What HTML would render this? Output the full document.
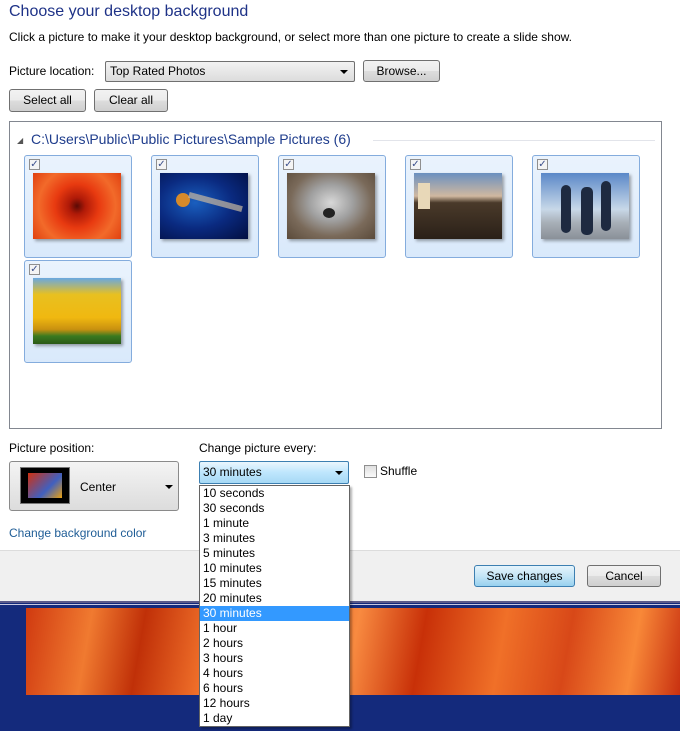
<!DOCTYPE html>
<html><head><style>
*{margin:0;padding:0;box-sizing:border-box}
body{width:680px;height:731px;overflow:hidden;background:#fff;font-family:"Liberation Sans","DejaVu Sans",sans-serif;font-size:12px;color:#000;position:relative}
.a{position:absolute;white-space:nowrap}
.btn{position:absolute;border:1px solid #707070;border-radius:3px;background:linear-gradient(#f2f2f2 0%,#ebebeb 50%,#dddddd 51%,#cfcfcf 100%);text-align:center;font-size:12px}
.tile{position:absolute;width:108px;height:103px;border:1px solid #84acdd;border-radius:3px;background:linear-gradient(#eaf3fd,#d9e9fb)}
.tile .cb{position:absolute;left:4px;top:3px;width:11px;height:11px;border:1px solid #8f8f8f;background:#f4f4f4;font-size:10px;line-height:9px;color:#3b4f8c;text-align:center}
.tile .im{position:absolute;left:8px;top:17px;width:88px;height:66px;box-shadow:2px 2px 3px rgba(0,0,0,.35)}
.dd div{height:15px;line-height:15px;padding-left:3px;font-size:12px}
</style></head><body>
<div class="a" style="left:9px;top:3px;font-size:16px;color:#1e3287">Choose your desktop background</div>
<div class="a" style="left:9px;top:30px">Click a picture to make it your desktop background, or select more than one picture to create a slide show.</div>
<div class="a" style="left:9px;top:64px">Picture location:</div>
<div class="a" style="left:105px;top:61px;width:250px;height:21px;border:1px solid #707070;border-radius:2px;background:linear-gradient(#f3f3f3,#dcdcdc);padding:2px 4px">Top Rated Photos<span style="position:absolute;right:6px;top:8px;border:4px solid transparent;border-top:4px solid #000;border-bottom:0"></span></div>
<div class="btn" style="left:363px;top:60px;width:77px;height:22px;line-height:20px">Browse...</div>
<div class="btn" style="left:9px;top:89px;width:77px;height:23px;line-height:21px">Select all</div>
<div class="btn" style="left:94px;top:89px;width:74px;height:23px;line-height:21px">Clear all</div>
<div class="a" style="left:9px;top:121px;width:653px;height:308px;border:1px solid #828790"></div>
<div class="a" style="left:17px;top:136px;font-size:8px;color:#555">&#9698;</div>
<div class="a" style="left:31px;top:131px;font-size:14px;color:#1e3c8c">C:\Users\Public\Public Pictures\Sample Pictures (6)</div>
<div class="a" style="left:373px;top:140px;width:282px;height:1px;background:#e2e4ea"></div>

<div class="tile" style="left:24px;top:155px"><div class="cb">&#10003;</div><div class="im" style="background:radial-gradient(circle at 50% 50%,#5a0a05 0,#b01a08 15%,#e83a10 40%,#f26a2a 70%,#e04010 100%)"></div></div>
<div class="tile" style="left:151px;top:155px"><div class="cb">&#10003;</div><div class="im" style="background:radial-gradient(ellipse at 40% 45%,#1a5fbf,#0a2a80 50%,#020e40)"><div style="position:absolute;left:16px;top:20px;width:14px;height:14px;border-radius:50%;background:#d68a2a"></div><div style="position:absolute;left:28px;top:26px;width:55px;height:6px;background:#c8b8a0;transform:rotate(15deg);opacity:.7"></div></div></div>
<div class="tile" style="left:278px;top:155px"><div class="cb">&#10003;</div><div class="im" style="background:radial-gradient(ellipse at 50% 45%,#d8d8d8,#a0a0a0 35%,#7a6a5a 65%,#5a4a3a)"><div style="position:absolute;left:36px;top:35px;width:12px;height:10px;border-radius:50%;background:#222"></div></div></div>
<div class="tile" style="left:405px;top:155px"><div class="cb">&#10003;</div><div class="im" style="background:linear-gradient(#6a90c0 0%,#d0b8a0 35%,#4a3a2a 45%,#2a2018 100%)"><div style="position:absolute;left:4px;top:10px;width:12px;height:26px;background:#e8d8b8"></div></div></div>
<div class="tile" style="left:532px;top:155px"><div class="cb">&#10003;</div><div class="im" style="background:linear-gradient(#5a88c8,#c8d8e8 55%,#a8b0b8 75%,#8a9098)"><div style="position:absolute;left:20px;top:12px;width:10px;height:48px;background:#1e2a40;border-radius:5px"></div><div style="position:absolute;left:40px;top:14px;width:12px;height:48px;background:#1e2a40;border-radius:5px"></div><div style="position:absolute;left:60px;top:8px;width:10px;height:50px;background:#1e2a40;border-radius:5px"></div></div></div>
<div class="tile" style="left:24px;top:260px"><div class="cb">&#10003;</div><div class="im" style="background:linear-gradient(#6aa8e0 0%,#e8c020 25%,#f0b810 60%,#c89010 78%,#3a7a20 88%,#2a5a18 100%)"></div></div>

<div class="a" style="left:9px;top:441px">Picture position:</div>
<div class="a" style="left:199px;top:441px">Change picture every:</div>
<div class="a" style="left:9px;top:461px;width:170px;height:50px;border:1px solid #8a8a8a;border-radius:3px;background:linear-gradient(#f4f4f4,#dcdcdc)">
<div style="position:absolute;left:10px;top:5px;width:50px;height:37px;background:#000;border:1px solid #777"><div style="position:absolute;left:7px;top:5px;width:34px;height:25px;background:linear-gradient(135deg,#d03010,#4060c0 60%,#e8a010)"></div></div>
<div style="position:absolute;left:70px;top:18px">Center</div>
<span style="position:absolute;right:5px;top:23px;border:4px solid transparent;border-top:4px solid #000;border-bottom:0"></span></div>
<div class="a" style="left:199px;top:461px;width:150px;height:23px;border:1px solid #3c7fb1;border-radius:2px;background:linear-gradient(#eaf6fd,#bee6fd 50%,#a7d9f5);padding:3px 3px">30 minutes<span style="position:absolute;right:5px;top:9px;border:4px solid transparent;border-top:4px solid #000;border-bottom:0"></span></div>
<div class="a" style="left:364px;top:465px;width:13px;height:13px;border:1px solid #8f8f8f;background:linear-gradient(#e0e0e0,#fafafa)"></div>
<div class="a" style="left:380px;top:464px">Shuffle</div>
<div class="a" style="left:9px;top:526px;color:#1f5d96">Change background color</div>

<div class="a" style="left:0;top:550px;width:680px;height:52px;background:#f0f0f0;border-top:1px solid #dcdcdc"></div>
<div class="btn" style="left:474px;top:565px;width:101px;height:22px;line-height:20px;border-color:#3c7fb1;background:linear-gradient(#e5f4fc,#c4e5f6 50%,#98d1ef)">Save changes</div>
<div class="btn" style="left:587px;top:565px;width:74px;height:22px;line-height:20px">Cancel</div>
<div class="a" style="left:0;top:601px;width:680px;height:130px;background:#142a7c"></div>
<div class="a" style="left:0;top:601px;width:680px;height:2px;background:#5a5a8a"></div>
<div class="a" style="left:0;top:604px;width:680px;height:1px;background:#c8c8e0"></div>
<div class="a" style="left:26px;top:608px;width:654px;height:87px;background:linear-gradient(100deg,#d03a10 0%,#f07a30 10%,#c03008 18%,#f0702a 28%,#e05018 38%,#f88a40 50%,#c83008 60%,#f07028 72%,#d84818 82%,#f88838 92%,#c83010 100%)"></div>

<div class="a dd" style="left:199px;top:485px;width:151px;height:242px;background:#fff;border:1px solid #646464;box-shadow:2px 2px 2px rgba(0,0,0,.3)">
<div>10 seconds</div><div>30 seconds</div><div>1 minute</div><div>3 minutes</div><div>5 minutes</div><div>10 minutes</div><div>15 minutes</div><div>20 minutes</div><div style="background:#3399ff;color:#fff">30 minutes</div><div>1 hour</div><div>2 hours</div><div>3 hours</div><div>4 hours</div><div>6 hours</div><div>12 hours</div><div>1 day</div>
</div>
</body></html>
